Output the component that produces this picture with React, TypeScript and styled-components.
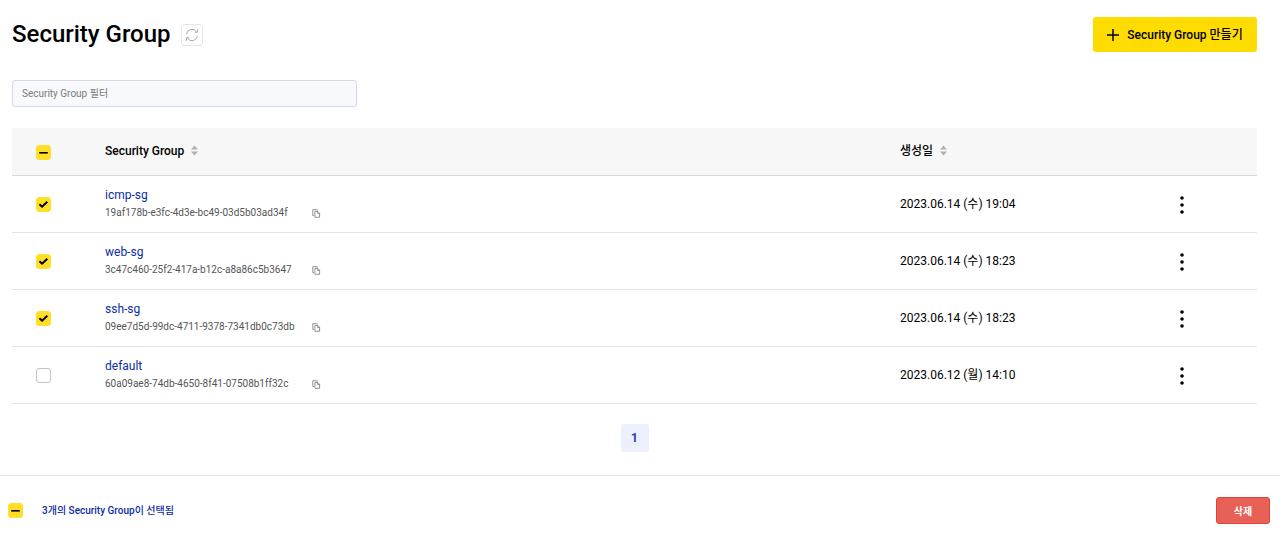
import React, { useEffect, useRef, useState } from 'react';
import styled, { createGlobalStyle } from 'styled-components';

const GlobalStyle = createGlobalStyle`
  *, *::before, *::after { box-sizing: border-box; }
  body {
    margin: 0;
    background: #fff;
    color: #000;
    font-family: Roboto, "Noto Sans CJK KR", sans-serif;
    font-size: 12px;
    line-height: 20px;
  }
  button, input { font-family: inherit; margin: 0; }
  button { padding: 0; cursor: pointer; }
`;

const Content = styled.main`
  padding: 17px 23px 23px 12px;
`;

const PageHeader = styled.header`
  display: flex;
  align-items: center;
  justify-content: space-between;
  height: 35px;
  margin-bottom: 28px;
`;

const TitleGroup = styled.div`
  display: flex;
  align-items: center;
  gap: 10px;
`;

const Title = styled.h1`
  margin: 0;
  padding-bottom: 2px;
  font-size: 24px;
  line-height: 32px;
  font-weight: 500;
`;

const RefreshButton = styled.button`
  display: grid;
  place-items: center;
  width: 22px;
  height: 22px;
  border: 1px solid #e6e6e6;
  border-radius: 3px;
  background: #fff;
  color: #aaa;
`;

const CreateButton = styled.button`
  display: flex;
  align-items: center;
  justify-content: center;
  gap: 8px;
  width: 164px;
  height: 35px;
  border: 0;
  border-radius: 3px;
  background: #ffdc00;
  color: #000;
  font-size: 12px;
  line-height: 20px;
  font-weight: 500;
`;

const FilterInput = styled.input`
  display: block;
  width: 345px;
  max-width: 100%;
  height: 27px;
  margin-bottom: 21px;
  padding: 0 9px;
  border: 1px solid #d5d9e5;
  border-radius: 3px;
  background: #f8f9fc;
  font-size: 10px;
  &::placeholder { color: #7b7b7b; opacity: 1; }
`;

const Table = styled.table`
  width: 100%;
  table-layout: fixed;
  border-collapse: separate;
  border-spacing: 0;
`;

const Col = styled.col<{ $width?: number }>`
  width: ${({ $width }) => ($width ? `${$width}px` : 'auto')};
`;

const HeadCell = styled.th<{ $center?: boolean }>`
  height: 48px;
  padding: ${({ $center }) => ($center ? '1px 0 0' : '0 0 2px 30px')};
  border-bottom: 1px solid #d9d9d9;
  background: #f7f7f7;
  font-size: 12px;
  font-weight: 500;
  text-align: left;
`;

const Cell = styled.td<{ $center?: boolean }>`
  height: 57px;
  padding: ${({ $center }) => ($center ? '1px 0 0' : '0 0 0 30px')};
  border-bottom: 1px solid #e3e3e3;
`;

const Centered = styled.div`
  display: flex;
  justify-content: center;
`;

const SortButton = styled.button`
  display: flex;
  align-items: center;
  gap: 7px;
  border: 0;
  background: none;
  color: #000;
  font-size: 12px;
  line-height: 20px;
  font-weight: 500;
`;

const NameLink = styled.a`
  display: block;
  width: fit-content;
  color: #0b2da5;
  line-height: 18px;
  text-decoration: none;
`;

const IdLine = styled.div`
  display: flex;
  align-items: center;
  color: #555;
  font-size: 10px;
  line-height: 18px;
`;

const IdText = styled.span`
  width: 207px;
  white-space: nowrap;
`;

const IconButton = styled.button`
  display: grid;
  place-items: center;
  border: 0;
  background: none;
  color: inherit;
`;

const CheckLabel = styled.label`
  display: grid;
  width: 15px;
  height: 15px;
  > * { grid-area: 1 / 1; }
  svg { pointer-events: none; z-index: 1; }
`;

const CheckInput = styled.input`
  appearance: none;
  width: 15px;
  height: 15px;
  border: 1px solid #c4c4c4;
  border-radius: 3px;
  background: #fff;
  &:checked, &:indeterminate {
    border-color: #ffe02e;
    background: #ffdf26;
  }
`;

const Pagination = styled.nav`
  display: flex;
  justify-content: center;
  margin-top: 20px;
`;

const PageButton = styled.button`
  width: 28px;
  height: 28px;
  border: 0;
  border-radius: 3px;
  background: #eceffc;
  color: #3038ad;
  font-size: 12px;
  font-weight: 700;
`;

const SelectionBar = styled.footer`
  display: flex;
  align-items: center;
  gap: 19px;
  padding: 21px 10px 13px 8px;
  border-top: 1px solid #e3e3e3;
`;

const SelectionText = styled.span`
  flex: 1;
  color: #0b2da5;
  font-size: 10px;
  font-weight: 500;
`;

const DeleteButton = styled.button`
  width: 54px;
  height: 27px;
  border: 1px solid #dc4339;
  border-radius: 3px;
  background: #e86156;
  color: #fff;
  font-size: 10px;
  font-weight: 700;
`;

function Checkbox({ checked, mixed = false, label, onToggle }: {
  checked: boolean; mixed?: boolean; label: string; onToggle: () => void;
}) {
  const ref = useRef<HTMLInputElement>(null);
  useEffect(() => {
    if (ref.current) ref.current.indeterminate = mixed;
  }, [mixed]);
  return (
    <CheckLabel>
      <CheckInput ref={ref} type="checkbox" aria-label={label} checked={checked} onChange={onToggle} />
      {(checked || mixed) && (
        <svg width="15" height="15" viewBox="0 0 15 15" fill="none" stroke="#000" strokeWidth={mixed ? 1.6 : 2} aria-hidden="true">
          <path d={mixed ? 'M3.2 7.8h8.6' : 'M3.4 7.2l2.7 2.5 5.2-5'} />
        </svg>
      )}
    </CheckLabel>
  );
}

const SortIcon = () => (
  <svg width="7" height="11" viewBox="0 0 7 11" fill="#b0b0b0" aria-hidden="true">
    <path d="M3.5 0.5L7 4.5H0zM3.5 10.5L0 6.5h7z" />
  </svg>
);

const CopyIcon = () => (
  <svg width="9" height="9" viewBox="0 0 9 9" fill="none" stroke="#888" strokeWidth="0.9" aria-hidden="true">
    <path d="M2 6.5H.8V.7h4.4v1M2.9 2.5h3l1.7 1.8v4H2.9zM5.7 2.5v2h2" />
  </svg>
);

const RefreshIcon = () => (
  <svg width="14" height="14" viewBox="0 0 14 14" fill="none" stroke="currentColor" aria-hidden="true">
    <path d="M1.5 6.2a5.5 5.5 0 0 1 10-2.5M12.5 1.2v3H9.6M12.5 7.8a5.5 5.5 0 0 1-10 2.5M1.5 12.8v-3h2.9" />
  </svg>
);

const PlusIcon = () => (
  <svg width="12" height="12" viewBox="0 0 12 12" fill="none" stroke="currentColor" strokeWidth="1.5" aria-hidden="true">
    <path d="M6 0v12M0 6h12" />
  </svg>
);

const MoreIcon = () => (
  <svg width="4" height="18" viewBox="0 0 4 18" fill="#000" aria-hidden="true">
    <circle cx="2" cy="2" r="1.8" />
    <circle cx="2" cy="9" r="1.8" />
    <circle cx="2" cy="16" r="1.8" />
  </svg>
);

const groups = [
  { name: 'icmp-sg', id: '19af178b-e3fc-4d3e-bc49-03d5b03ad34f', created: '2023.06.14 (수) 19:04' },
  { name: 'web-sg', id: '3c47c460-25f2-417a-b12c-a8a86c5b3647', created: '2023.06.14 (수) 18:23' },
  { name: 'ssh-sg', id: '09ee7d5d-99dc-4711-9378-7341db0c73db', created: '2023.06.14 (수) 18:23' },
  { name: 'default', id: '60a09ae8-74db-4650-8f41-07508b1ff32c', created: '2023.06.12 (월) 14:10' },
];

export default function App() {
  const [selected, setSelected] = useState<string[]>(groups.slice(0, 3).map((g) => g.id));
  const all = selected.length === groups.length;
  const mixed = selected.length > 0 && !all;
  const toggleAll = () => setSelected(all ? [] : groups.map((g) => g.id));
  const toggle = (id: string) =>
    setSelected((ids) => (ids.includes(id) ? ids.filter((i) => i !== id) : [...ids, id]));

  return (
    <>
      <GlobalStyle />
      <Content>
        <PageHeader>
          <TitleGroup>
            <Title>Security Group</Title>
            <RefreshButton type="button" aria-label="새로고침"><RefreshIcon /></RefreshButton>
          </TitleGroup>
          <CreateButton type="button"><PlusIcon />Security Group 만들기</CreateButton>
        </PageHeader>
        <FilterInput type="text" aria-label="Security Group 필터" placeholder="Security Group 필터" />
        <Table>
          <colgroup>
            <Col $width={63} />
            <Col />
            <Col $width={236} />
            <Col $width={151} />
          </colgroup>
          <thead>
            <tr>
              <HeadCell $center>
                <Centered><Checkbox label="전체 선택" checked={all} mixed={mixed} onToggle={toggleAll} /></Centered>
              </HeadCell>
              <HeadCell scope="col"><SortButton type="button">Security Group<SortIcon /></SortButton></HeadCell>
              <HeadCell scope="col"><SortButton type="button">생성일<SortIcon /></SortButton></HeadCell>
              <HeadCell $center />
            </tr>
          </thead>
          <tbody>
            {groups.map((group) => (
              <tr key={group.id}>
                <Cell $center>
                  <Centered>
                    <Checkbox label={group.name} checked={selected.includes(group.id)} onToggle={() => toggle(group.id)} />
                  </Centered>
                </Cell>
                <Cell>
                  <NameLink href={`#${group.name}`}>{group.name}</NameLink>
                  <IdLine>
                    <IdText>{group.id}</IdText>
                    <IconButton type="button" aria-label="ID 복사"><CopyIcon /></IconButton>
                  </IdLine>
                </Cell>
                <Cell>{group.created}</Cell>
                <Cell $center>
                  <Centered>
                    <IconButton type="button" aria-label={`${group.name} 메뉴`}><MoreIcon /></IconButton>
                  </Centered>
                </Cell>
              </tr>
            ))}
          </tbody>
        </Table>
        <Pagination aria-label="페이지">
          <PageButton type="button" aria-current="page">1</PageButton>
        </Pagination>
      </Content>
      <SelectionBar>
        <Checkbox label="선택 항목" checked={all} mixed={mixed} onToggle={toggleAll} />
        <SelectionText>{selected.length}개의 Security Group이 선택됨</SelectionText>
        <DeleteButton type="button">삭제</DeleteButton>
      </SelectionBar>
    </>
  );
}
